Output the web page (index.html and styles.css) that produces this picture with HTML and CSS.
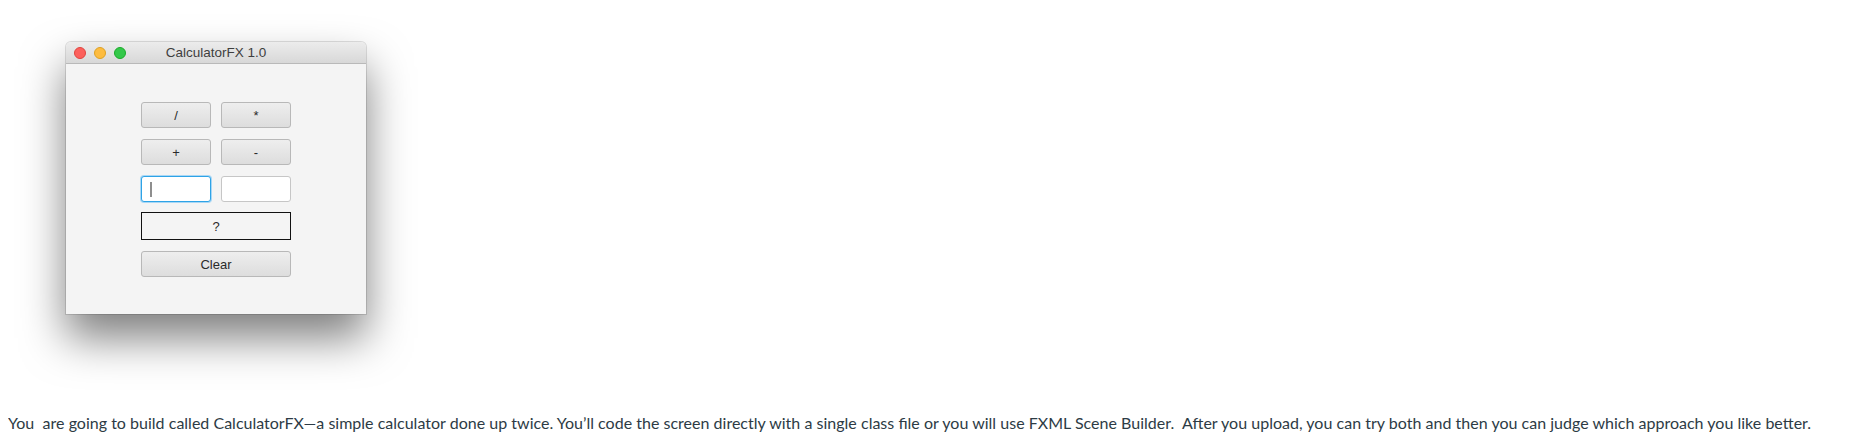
FILE: index.html
```html
<!DOCTYPE html>
<html lang="en">
<head>
  <meta charset="UTF-8">
  <title>CalculatorFX</title>
  <link rel="stylesheet" href="styles.css">
</head>
<body>
  <div class="stage">
    <div class="window">
      <div class="titlebar">
        <div class="lights">
          <span class="light red"></span>
          <span class="light yellow"></span>
          <span class="light green"></span>
        </div>
        <div class="title">CalculatorFX 1.0</div>
      </div>
      <div class="content">
        <div class="grid">
          <button class="btn">/</button>
          <button class="btn">*</button>
          <button class="btn">+</button>
          <button class="btn">-</button>
          <div class="field focused"><span class="caret"></span></div>
          <div class="field"></div>
          <div class="result">?</div>
          <button class="btn wide">Clear</button>
        </div>
      </div>
    </div>
  </div>

  <p class="intro">You &nbsp;are going to build called CalculatorFX—a simple calculator done up twice. You’ll code the screen directly with a single class file or you will use FXML Scene Builder. &nbsp;After you upload, you can try both and then you can judge which approach you like better.</p>
</body>
</html>
```

FILE: styles.css
```css
body {
  margin: 8px;
  background: #fff;
  color: #2d3b45;
  font-family: Lato, "Liberation Sans", sans-serif;
}

.stage {
  padding: 34px 0 0 58px;
}

.window {
  width: 300px;
  height: 272px;
  display: flex;
  flex-direction: column;
  background: #f4f4f4;
  border-radius: 5px 5px 0 0;
  box-shadow: 0 0 0 1px rgba(0, 0, 0, 0.12), 0 24px 44px rgba(0, 0, 0, 0.5);
  font-family: "Liberation Sans", Arial, sans-serif;
}

.titlebar {
  position: relative;
  height: 21px;
  border-bottom: 1px solid #b9b9b9;
  border-radius: 5px 5px 0 0;
  background: linear-gradient(#ececec, #d8d8d8);
  display: flex;
  align-items: center;
  justify-content: center;
}

.lights {
  position: absolute;
  left: 8px;
  top: 5px;
  display: flex;
  gap: 8px;
}

.light {
  width: 12px;
  height: 12px;
  border-radius: 50%;
  box-sizing: border-box;
}

.red { background: #fc605c; border: 1px solid #e0443e; }
.yellow { background: #fdbc40; border: 1px solid #dea123; }
.green { background: #34c84a; border: 1px solid #1aab29; }

.title {
  font-size: 13.5px;
  color: #3e3e3e;
}

.content {
  flex: 1;
  display: flex;
  justify-content: center;
  padding-top: 38px;
}

.grid {
  display: grid;
  grid-template-columns: 70px 70px;
  column-gap: 10px;
  row-gap: 11px;
  align-content: start;
}

.btn {
  height: 26px;
  margin: 0;
  padding: 0;
  border: 1px solid #b8b8b8;
  border-radius: 3px;
  background: linear-gradient(#eeeeee, #dddddd);
  font-family: "Liberation Sans", Arial, sans-serif;
  font-size: 13px;
  color: #2a2a2a;
}

.wide {
  grid-column: span 2;
}

.field {
  height: 26px;
  box-sizing: border-box;
  border: 1px solid #c6c6c6;
  border-radius: 3px;
  background: #fff;
  position: relative;
}

.focused {
  border-color: #2ea3e6;
  box-shadow: 0 0 0 1px #a9d7f5;
}

.caret {
  position: absolute;
  left: 8px;
  top: 5px;
  width: 2px;
  height: 15px;
  background: #8e8e8e;
}

.result {
  grid-column: span 2;
  height: 28px;
  box-sizing: border-box;
  border: 1.5px solid #111;
  display: flex;
  align-items: center;
  justify-content: center;
  font-size: 13px;
  color: #2a2a2a;
  margin-top: -1px;
}

.intro {
  margin: 97px 0 0;
  font-size: 16px;
  line-height: 1.5;
  word-spacing: 0.08px;
}
```
